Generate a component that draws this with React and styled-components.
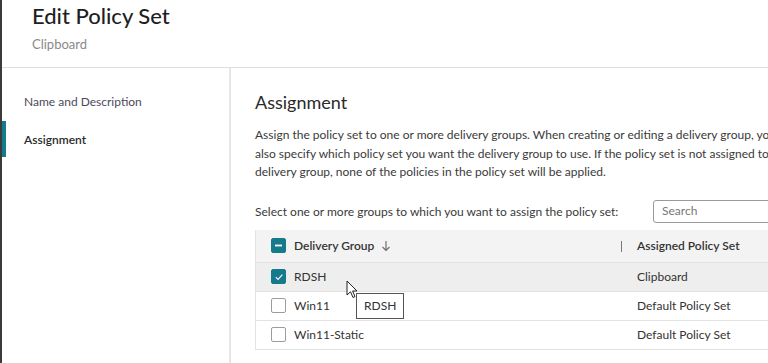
import React from "react";
import styled, { createGlobalStyle } from "styled-components";

const Global = createGlobalStyle`
  html, body { margin: 0; padding: 0; background: #fff; }
  body { width: 768px; height: 363px; overflow: hidden; font-family: Lato, "Noto Sans", sans-serif; color: #333; }
  * { box-sizing: border-box; }
`;

const Page = styled.div`
  width: 768px;
  height: 363px;
  display: flex;
  flex-direction: column;
  overflow: hidden;
  border-left: 2px solid #3b3b3b;
  position: relative;
`;

const Header = styled.header`
  height: 68px;
  flex: none;
  padding: 2px 0 0 30px;
  border-bottom: 1px solid #dedede;
`;

const Title = styled.h1`
  margin: 0;
  font-size: 22px;
  line-height: 28px;
  font-weight: 500;
  color: #1f1f1f;
`;

const Subtitle = styled.div`
  margin-top: 6px;
  font-size: 13px;
  color: #8a8a8a;
`;

const Body = styled.div`
  flex: 1;
  display: flex;
  min-height: 0;
`;

const Sidebar = styled.nav`
  width: 229px;
  flex: none;
  border-right: 2px solid #e6e6e6;
  padding-top: 14px;
  display: flex;
  flex-direction: column;
`;

const NavItem = styled.div`
  position: relative;
  height: 38px;
  display: flex;
  align-items: center;
  padding-left: 22px;
  font-size: 12px;
  color: ${(p) => (p.$active ? "#2b2b2b" : "#4a4a5a")};
  font-weight: ${(p) => (p.$active ? 600 : 400)};
  &::before {
    content: "";
    display: ${(p) => (p.$active ? "block" : "none")};
    position: absolute;
    left: -2px;
    top: 1px;
    bottom: 1px;
    width: 6px;
    background: #157a8b;
  }
`;

const Main = styled.main`
  flex: none;
  width: 620px;
  padding: 22px 0 0 24px;
  position: relative;
`;

const Heading = styled.h2`
  margin: 0;
  font-size: 18px;
  line-height: 24px;
  font-weight: 400;
  color: #2a2a2a;
`;

const Para = styled.p`
  margin: 12px 0 0;
  font-size: 12px;
  line-height: 18.5px;
  color: #3a3a3a;
  white-space: nowrap;
`;

const SelectRow = styled.div`
  margin-top: 19px;
  display: flex;
  align-items: center;
  justify-content: space-between;
  height: 22px;
`;

const SelectLabel = styled.span`
  font-size: 12px;
  color: #3a3a3a;
`;

const Search = styled.div`
  width: 198px;
  height: 23px;
  border: 1px solid #9a9a9a;
  border-radius: 3px;
  padding-left: 8px;
  font-size: 12px;
  line-height: 20px;
  color: #777;
`;

const Table = styled.div`
  margin-top: 7px;
  width: 560px;
  border-left: 1px solid #e3e3e3;
`;

const Row = styled.div`
  display: grid;
  grid-template-columns: 366px 1fr;
  height: ${(p) => (p.$head ? "33px" : "29px")};
  align-items: center;
  background: ${(p) => (p.$head ? "#f3f3f3" : p.$selected ? "#eeeeee" : "#fff")};
  border-bottom: 1px solid #e2e2e2;
  font-size: 12px;
  color: #333;
  font-weight: ${(p) => (p.$head ? 600 : 400)};
`;

const Cell = styled.div`
  display: flex;
  align-items: center;
  padding-left: 15px;
  gap: 8px;
  position: relative;
`;

const Divider = styled.span`
  position: absolute;
  left: -1px;
  top: 50%;
  width: 1px;
  height: 11px;
  margin-top: -5px;
  background: #777;
`;

const Box = styled.span`
  width: 15px;
  height: 15px;
  border-radius: 2px;
  flex: none;
  display: flex;
  align-items: center;
  justify-content: center;
  background: ${(p) => (p.$on ? "#157a8b" : "#fff")};
  border: 1.5px solid ${(p) => (p.$on ? "#157a8b" : "#9c9c9c")};
`;

const SortArrow = styled.svg`
  margin-left: -1px;
  flex: none;
`;

const Tooltip = styled.div`
  position: absolute;
  left: 125px;
  top: 225px;
  height: 26px;
  padding: 0 7px;
  border: 1px solid #555;
  background: #fff;
  font-size: 12px;
  line-height: 24px;
  color: #333;
`;

const Cursor = styled.svg`
  position: absolute;
  left: 115px;
  top: 212px;
`;

function Check({ state }) {
  if (state === "indeterminate")
    return (
      <Box $on>
        <svg width="9" height="9" viewBox="0 0 9 9"><rect x="1" y="3.6" width="7" height="1.8" fill="#fff" /></svg>
      </Box>
    );
  if (state === "checked")
    return (
      <Box $on>
        <svg width="10" height="10" viewBox="0 0 10 10"><path d="M1.8 5.2 L4 7.4 L8.4 2.6" stroke="#fff" strokeWidth="1.1" fill="none" /></svg>
      </Box>
    );
  return <Box />;
}

const rows = [
  { name: "RDSH", policy: "Clipboard", checked: true },
  { name: "Win11", policy: "Default Policy Set" },
  { name: "Win11-Static", policy: "Default Policy Set" },
];

export default function App() {
  return (
    <>
      <Global />
      <Page>
        <Header>
          <Title>Edit Policy Set</Title>
          <Subtitle>Clipboard</Subtitle>
        </Header>
        <Body>
          <Sidebar>
            <NavItem>Name and Description</NavItem>
            <NavItem $active>Assignment</NavItem>
          </Sidebar>
          <Main>
            <Heading>Assignment</Heading>
            <Para>
              Assign the policy set to one or more delivery groups. When creating or editing a delivery group, you can
              <br />
              also specify which policy set you want the delivery group to use. If the policy set is not assigned to a
              <br />
              delivery group, none of the policies in the policy set will be applied.
            </Para>
            <SelectRow>
              <SelectLabel>Select one or more groups to which you want to assign the policy set:</SelectLabel>
              <Search>Search</Search>
            </SelectRow>
            <Table>
              <Row $head>
                <Cell>
                  <Check state="indeterminate" />
                  <span>Delivery Group</span>
                  <SortArrow width="10" height="12" viewBox="0 0 10 12">
                    <path d="M5 1 V10.5 M1.5 7 L5 10.5 L8.5 7" stroke="#707070" strokeWidth="1.2" fill="none" />
                  </SortArrow>
                </Cell>
                <Cell>
                  <Divider />
                  Assigned Policy Set
                </Cell>
              </Row>
              {rows.map((r) => (
                <Row key={r.name} $selected={r.checked}>
                  <Cell>
                    <Check state={r.checked ? "checked" : "none"} />
                    <span>{r.name}</span>
                  </Cell>
                  <Cell>{r.policy}</Cell>
                </Row>
              ))}
            </Table>
            <Cursor width="14" height="20" viewBox="0 0 14 20">
              <path d="M1 1 L1 15 L4.5 11.8 L7 17.5 L9 16.6 L6.6 11 L11 11 Z" fill="#fff" stroke="#222" strokeWidth="1" strokeLinejoin="round" />
            </Cursor>
            <Tooltip>RDSH</Tooltip>
          </Main>
        </Body>
      </Page>
    </>
  );
}
